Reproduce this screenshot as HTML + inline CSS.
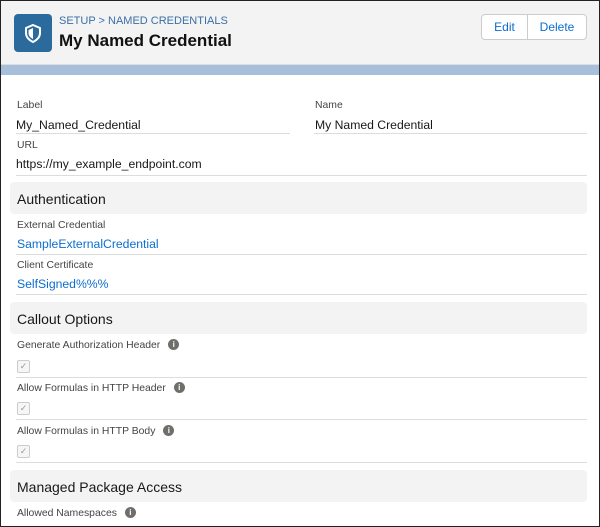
<!DOCTYPE html>
<html><head><style>
*{margin:0;padding:0;box-sizing:border-box}
body{width:600px;height:527px;overflow:hidden;font-family:"Liberation Sans",sans-serif;background:#fff;position:relative;color:#181818}
.frame{position:absolute;left:0;top:0;width:600px;height:527px;border:1px solid #222;pointer-events:none;z-index:9}
.hdr{position:absolute;left:0;top:0;width:600px;height:65px;background:#f3f3f3;border-bottom:1px solid #ddd}
.band{position:absolute;left:0;top:65px;width:600px;height:10px;background:#a8bfdc}
.icon{position:absolute;left:14px;top:14px;width:38px;height:38px;background:#2a6a9c;border-radius:4px}
.bc{position:absolute;left:59px;top:15px;font-size:11px;color:#3a6fa6}
.title{position:absolute;left:59px;top:31px;font-size:17px;font-weight:bold;color:#111}
.btns{position:absolute;left:481px;top:14px;width:106px;height:26px;border:1px solid #ccc;border-radius:4px;background:#fff;display:flex;font-size:12px;color:#0b6dd0}
.btns div{display:flex;align-items:center;justify-content:center}
.t{position:absolute;font-size:10.4px;color:#444}
.v{position:absolute;font-size:12.2px;color:#181818}
.a{color:#0b6dd0}
.ln{position:absolute;height:1px;background:#ddd}
.sec{position:absolute;left:10px;width:577px;height:32px;background:#f3f3f3;border-radius:4px;font-size:14px;padding:9px 0 0 7px;color:#181818}
.cb{position:absolute;left:17px;width:13px;height:13px;border:1px solid #ccc;border-radius:2px;background:#f6f6f6;font-size:9px;color:#999;text-align:center;line-height:11px}
.i{display:inline-block;width:11px;height:11px;border-radius:50%;background:#706e6b;color:#fff;font-size:8px;font-weight:bold;text-align:center;line-height:11px;vertical-align:1px;margin-left:8px}
</style></head><body>
<div class="hdr"></div><div class="band"></div>
<div class="icon"><svg width="38" height="38" viewBox="0 0 38 38"><path d="M19 11l7 3v5c0 4-3 7-7 9c-4-2-7-5-7-9v-5z" fill="none" stroke="#fff" stroke-width="2"/><path d="M19 14v11c-3-1.5-4.5-3.5-4.5-6v-3z" fill="#fff"/></svg></div>
<div class="bc">SETUP &gt; NAMED CREDENTIALS</div>
<div class="title">My Named Credential</div>
<div class="btns"><div style="width:46px;border-right:1px solid #ccc">Edit</div><div style="flex:1">Delete</div></div>

<div class="t" style="left:17px;top:100px">Label</div>
<div class="v" style="left:16px;top:118px">My_Named_Credential</div>
<div class="ln" style="left:16px;top:133px;width:274px"></div>
<div class="t" style="left:315px;top:100px">Name</div>
<div class="v" style="left:315px;top:118px">My Named Credential</div>
<div class="ln" style="left:314px;top:133px;width:273px"></div>
<div class="t" style="left:17px;top:140px">URL</div>
<div class="v" style="left:16px;top:157px">https://my_example_endpoint.com</div>
<div class="ln" style="left:16px;top:175px;width:571px"></div>

<div class="sec" style="top:182px">Authentication</div>
<div class="t" style="left:17px;top:220px">External Credential</div>
<div class="v a" style="left:17px;top:237px">SampleExternalCredential</div>
<div class="ln" style="left:16px;top:254px;width:571px"></div>
<div class="t" style="left:17px;top:260px">Client Certificate</div>
<div class="v a" style="left:17px;top:277px">SelfSigned%%%</div>
<div class="ln" style="left:16px;top:294px;width:571px"></div>

<div class="sec" style="top:302px">Callout Options</div>
<div class="t" style="left:17px;top:339px">Generate Authorization Header<span class="i">i</span></div>
<div class="cb" style="top:360px">✓</div>
<div class="ln" style="left:16px;top:377px;width:571px"></div>
<div class="t" style="left:17px;top:382px">Allow Formulas in HTTP Header<span class="i">i</span></div>
<div class="cb" style="top:402px">✓</div>
<div class="ln" style="left:16px;top:419px;width:571px"></div>
<div class="t" style="left:17px;top:425px">Allow Formulas in HTTP Body<span class="i">i</span></div>
<div class="cb" style="top:445px">✓</div>
<div class="ln" style="left:16px;top:462px;width:571px"></div>

<div class="sec" style="top:470px">Managed Package Access</div>
<div class="t" style="left:17px;top:507px">Allowed Namespaces<span class="i">i</span></div>
<div class="frame"></div>
</body></html>
